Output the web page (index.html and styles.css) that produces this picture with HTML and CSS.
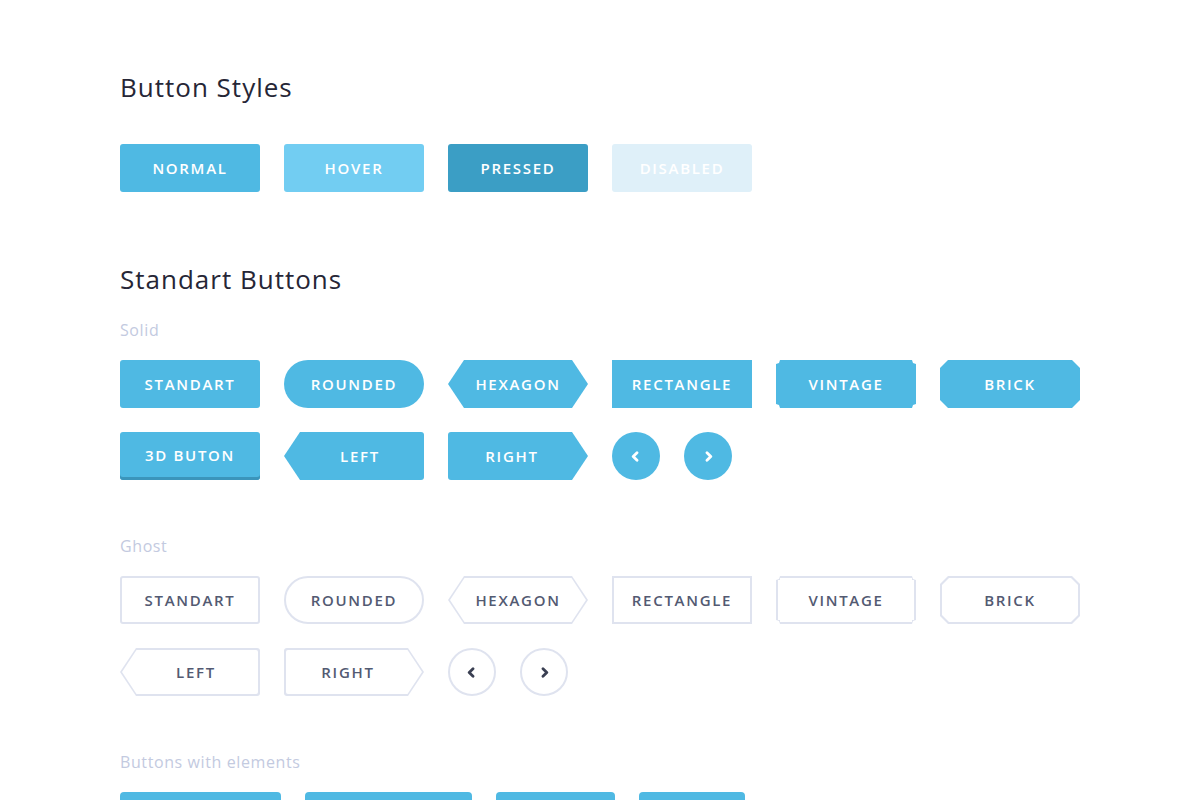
FILE: index.html
```html
<!DOCTYPE html>
<html lang="en">
<head>
  <meta charset="UTF-8">
  <meta name="viewport" content="width=device-width, initial-scale=1.0">
  <title>Buttons</title>
  <link rel="stylesheet" href="styles.css">
</head>
<body>
  <main class="page">
    <section class="block block-styles">
      <h2 class="title">Button Styles</h2>
      <div class="row">
        <button class="btn"><span>Normal</span></button>
        <button class="btn is-hover"><span>Hover</span></button>
        <button class="btn is-pressed"><span>Pressed</span></button>
        <button class="btn is-disabled" disabled><span>Disabled</span></button>
      </div>
    </section>

    <section class="block">
      <h2 class="title">Standart Buttons</h2>

      <p class="label">Solid</p>
      <div class="row">
        <button class="btn"><span>Standart</span></button>
        <button class="btn rounded"><span>Rounded</span></button>
        <button class="btn hex"><span>Hexagon</span></button>
        <button class="btn rect"><span>Rectangle</span></button>
        <button class="btn vintage"><span>Vintage</span></button>
        <button class="btn brick"><span>Brick</span></button>
      </div>
      <div class="row">
        <button class="btn btn-3d"><span>3D Buton</span></button>
        <button class="btn left"><span>Left</span></button>
        <button class="btn right"><span>Right</span></button>
        <button class="btn circle prev">
          <svg width="8" height="11" viewBox="0 0 8 11"><path d="M6 1.8 L2.2 5.5 L6 9.2" /></svg>
        </button>
        <button class="btn circle next">
          <svg width="8" height="11" viewBox="0 0 8 11"><path d="M2 1.8 L5.8 5.5 L2 9.2" /></svg>
        </button>
      </div>

      <p class="label">Ghost</p>
      <div class="row">
        <button class="btn ghost"><span>Standart</span></button>
        <button class="btn ghost rounded"><span>Rounded</span></button>
        <button class="btn ghost hex"><span>Hexagon</span></button>
        <button class="btn ghost rect"><span>Rectangle</span></button>
        <button class="btn ghost vintage"><span>Vintage</span></button>
        <button class="btn ghost brick"><span>Brick</span></button>
      </div>
      <div class="row">
        <button class="btn ghost left"><span>Left</span></button>
        <button class="btn ghost right"><span>Right</span></button>
        <button class="btn ghost circle prev">
          <svg width="8" height="11" viewBox="0 0 8 11"><path d="M6 1.8 L2.2 5.5 L6 9.2" /></svg>
        </button>
        <button class="btn ghost circle next">
          <svg width="8" height="11" viewBox="0 0 8 11"><path d="M2 1.8 L5.8 5.5 L2 9.2" /></svg>
        </button>
      </div>

      <p class="label">Buttons with elements</p>
      <div class="row row-elements">
        <button class="btn w161"></button>
        <button class="btn w167"></button>
        <button class="btn w119"></button>
        <button class="btn w106"></button>
      </div>
    </section>
  </main>
</body>
</html>
```

FILE: styles.css
```css
body {
  margin: 0;
  background: #fff;
  color: #262636;
  font-family: "Open Sans", sans-serif;
}
.page {
  padding: 71px 120px 0;
}
.title {
  margin: 0;
  font-size: 26px;
  line-height: 32px;
  font-weight: 400;
  letter-spacing: 1px;
  color: #262636;
}
.block-styles .title {
  margin-bottom: 41px;
}
.block + .block {
  margin-top: 71px;
}
.label {
  margin: 25px 0 20px;
  font-size: 16px;
  line-height: 20px;
  letter-spacing: 0.6px;
  color: #c3cadf;
}
.row {
  display: flex;
  gap: 24px;
}
.row + .row {
  margin-top: 24px;
}
.row + .label {
  margin-top: 56px;
}

.btn {
  position: relative;
  display: flex;
  align-items: center;
  justify-content: center;
  flex: none;
  width: 140px;
  height: 48px;
  padding: 0;
  border: 0;
  border-radius: 3px;
  background: #4fb9e3;
  color: #fff;
  font-family: "Open Sans", sans-serif;
  font-size: 15px;
  font-weight: 600;
  letter-spacing: 1.7px;
  text-transform: uppercase;
}
.btn span {
  position: relative;
}
.is-hover { background: #72cdf2; }
.is-pressed { background: #3b9ec5; }
.is-disabled { background: #dff0f9; }

.rounded { border-radius: 24px; }
.rect { border-radius: 0; }
.hex {
  border-radius: 0;
  clip-path: polygon(16px 0, calc(100% - 16px) 0, 100% 50%, calc(100% - 16px) 100%, 16px 100%, 0 50%);
}
.vintage {
  border-radius: 0;
  clip-path: polygon(0 4px, 3px 3px, 4px 0, calc(100% - 4px) 0, calc(100% - 3px) 3px, 100% 4px,
    100% calc(100% - 4px), calc(100% - 3px) calc(100% - 3px), calc(100% - 4px) 100%,
    4px 100%, 3px calc(100% - 3px), 0 calc(100% - 4px));
}
.brick {
  border-radius: 0;
  clip-path: polygon(8px 0, calc(100% - 8px) 0, 100% 8px, 100% calc(100% - 8px), calc(100% - 8px) 100%, 8px 100%, 0 calc(100% - 8px), 0 8px);
}
.left {
  padding-left: 12px;
  clip-path: polygon(16px 0, 100% 0, 100% 100%, 16px 100%, 0 50%);
}
.right {
  padding-right: 12px;
  clip-path: polygon(0 0, calc(100% - 16px) 0, 100% 50%, calc(100% - 16px) 100%, 0 100%);
}
.btn-3d {
  box-shadow: inset 0 -3px 0 #3b95bb;
  padding-bottom: 3px;
}
.circle {
  width: 48px;
  border-radius: 50%;
}
.circle.prev { padding-right: 2px; }
.circle.next { padding-left: 2px; }
.circle svg {
  fill: none;
  stroke: currentColor;
  stroke-width: 2.8;
  stroke-linecap: round;
  stroke-linejoin: round;
}

.ghost {
  background: #fff;
  border: 2px solid #dfe3ef;
  color: #535a72;
}
.ghost.circle {
  color: #3a3f52;
}
.ghost.hex, .ghost.vintage, .ghost.brick, .ghost.left, .ghost.right {
  border: 0;
  background: #dfe3ef;
}
.ghost.hex::before, .ghost.vintage::before, .ghost.brick::before, .ghost.left::before, .ghost.right::before {
  content: '';
  position: absolute;
  inset: 2px;
  background: #fff;
}
.ghost.hex::before {
  clip-path: polygon(14.5px 0, calc(100% - 14.5px) 0, 100% 50%, calc(100% - 14.5px) 100%, 14.5px 100%, 0 50%);
}
.ghost.vintage::before {
  clip-path: polygon(0 2px, 2px 2px, 2px 0, calc(100% - 2px) 0, calc(100% - 2px) 2px, 100% 2px,
    100% calc(100% - 2px), calc(100% - 2px) calc(100% - 2px), calc(100% - 2px) 100%,
    2px 100%, 2px calc(100% - 2px), 0 calc(100% - 2px));
}
.ghost.brick::before {
  clip-path: polygon(7px 0, calc(100% - 7px) 0, 100% 7px, 100% calc(100% - 7px), calc(100% - 7px) 100%, 7px 100%, 0 calc(100% - 7px), 0 7px);
}
.ghost.left::before {
  border-radius: 2px;
  clip-path: polygon(14.5px 0, 100% 0, 100% 100%, 14.5px 100%, 0 50%);
}
.ghost.right::before {
  border-radius: 2px;
  clip-path: polygon(0 0, calc(100% - 14.5px) 0, 100% 50%, calc(100% - 14.5px) 100%, 0 100%);
}

.row-elements .btn { border-radius: 4px; }
.w161 { width: 161px; }
.w167 { width: 167px; }
.w119 { width: 119px; }
.w106 { width: 106px; }
```
